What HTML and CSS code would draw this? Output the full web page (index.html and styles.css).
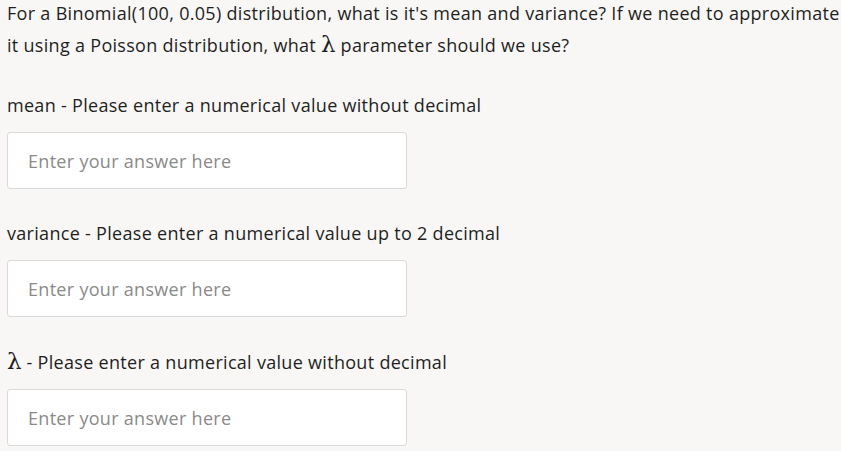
FILE: index.html
```html
<!DOCTYPE html>
<html>
<head>
<meta charset="utf-8">
<link rel="stylesheet" href="styles.css">
</head>
<body>
<div class="page">
  <p class="question">For a Binomial(100, 0.05) distribution, what is it's mean and variance? If we need to approximate it using a Poisson distribution, what <span class="lambda">λ</span> parameter should we use?</p>
  <div class="field">
    <label class="label">mean - Please enter a numerical value without decimal</label>
    <input class="answer" type="text" placeholder="Enter your answer here">
  </div>
  <div class="field">
    <label class="label">variance - Please enter a numerical value up to 2 decimal</label>
    <input class="answer" type="text" placeholder="Enter your answer here">
  </div>
  <div class="field last">
    <label class="label"><span class="lambda">λ</span> - Please enter a numerical value without decimal</label>
    <input class="answer" type="text" placeholder="Enter your answer here">
  </div>
</div>
</body>
</html>
```
FILE: styles.css
```css
html, body {
  margin: 0;
  padding: 0;
  background: #f8f7f5;
}
.page {
  padding: 0 0 0 7px;
  font-family: "Open Sans", "Liberation Sans", sans-serif;
  color: #1f1f1f;
  font-size: 18px;
  letter-spacing: 0.3px;
}
.question {
  margin: -3px 0 0 0;
  line-height: 32px;
}
.lambda {
  font-family: "DejaVu Serif", "Liberation Serif", serif;
  font-size: 23px;
  line-height: 20px;
  letter-spacing: 0;
}
.field {
  display: flex;
  flex-direction: column;
  align-items: flex-start;
}
.label {
  display: block;
  margin-top: 29px;
  line-height: 30px;
}
.last .label {
  margin-top: 30px;
}
.answer {
  margin-top: 12px;
  box-sizing: border-box;
  width: 400px;
  height: 57px;
  border: 1px solid #dadada;
  border-radius: 3px;
  background: #fff;
  padding: 0 20px;
  font-family: inherit;
  font-size: 18px;
  letter-spacing: 0.3px;
  color: #1f1f1f;
  outline: none;
}
.answer::placeholder {
  color: #8a8a8a;
}
```
